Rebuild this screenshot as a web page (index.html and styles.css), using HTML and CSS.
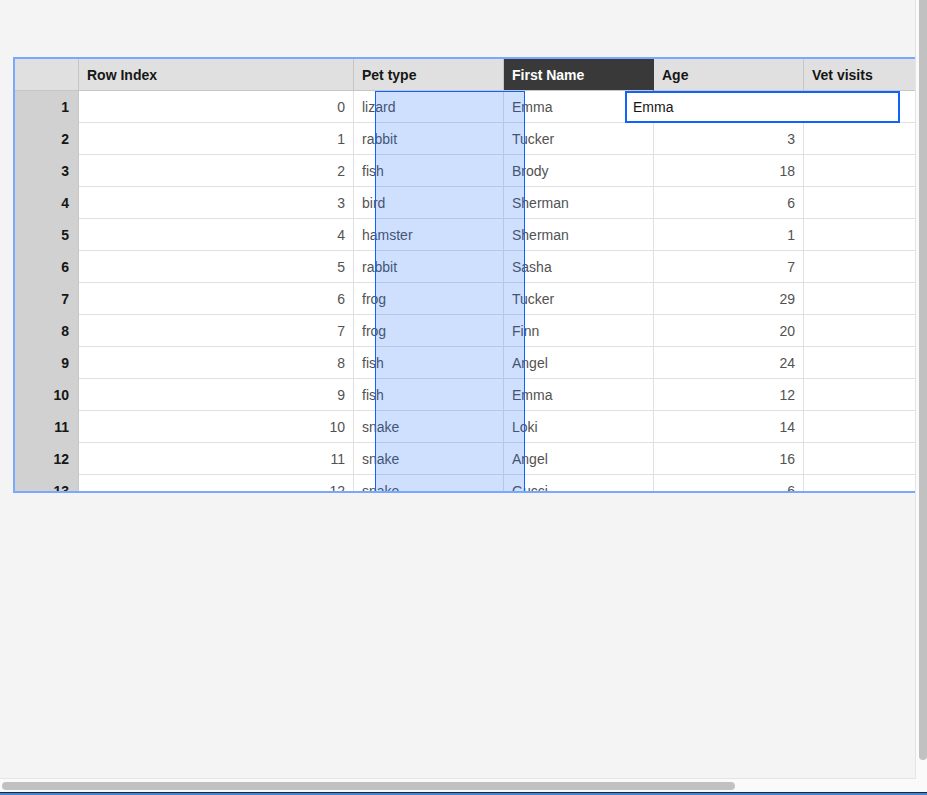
FILE: index.html
```html
<!DOCTYPE html>
<html>
<head>
<meta charset="utf-8">
<link rel="stylesheet" href="styles.css">
</head>
<body>
<div class="window">
  <div class="top">
    <div class="viewport">
      <div class="grid">
        <div class="cells">
          <div class="hc corner"></div><div class="hc">Row Index</div><div class="hc">Pet type</div><div class="hc active">First Name</div><div class="hc">Age</div><div class="hc">Vet visits</div>

          <div class="rh">1</div><div class="c num">0</div><div class="c">lizard</div><div class="c">Emma</div><div class="c num"></div><div class="c"></div>
          <div class="rh">2</div><div class="c num">1</div><div class="c">rabbit</div><div class="c">Tucker</div><div class="c num">3</div><div class="c"></div>
          <div class="rh">3</div><div class="c num">2</div><div class="c">fish</div><div class="c">Brody</div><div class="c num">18</div><div class="c"></div>
          <div class="rh">4</div><div class="c num">3</div><div class="c">bird</div><div class="c">Sherman</div><div class="c num">6</div><div class="c"></div>
          <div class="rh">5</div><div class="c num">4</div><div class="c">hamster</div><div class="c">Sherman</div><div class="c num">1</div><div class="c"></div>
          <div class="rh">6</div><div class="c num">5</div><div class="c">rabbit</div><div class="c">Sasha</div><div class="c num">7</div><div class="c"></div>
          <div class="rh">7</div><div class="c num">6</div><div class="c">frog</div><div class="c">Tucker</div><div class="c num">29</div><div class="c"></div>
          <div class="rh">8</div><div class="c num">7</div><div class="c">frog</div><div class="c">Finn</div><div class="c num">20</div><div class="c"></div>
          <div class="rh">9</div><div class="c num">8</div><div class="c">fish</div><div class="c">Angel</div><div class="c num">24</div><div class="c"></div>
          <div class="rh">10</div><div class="c num">9</div><div class="c">fish</div><div class="c">Emma</div><div class="c num">12</div><div class="c"></div>
          <div class="rh">11</div><div class="c num">10</div><div class="c">snake</div><div class="c">Loki</div><div class="c num">14</div><div class="c"></div>
          <div class="rh">12</div><div class="c num">11</div><div class="c">snake</div><div class="c">Angel</div><div class="c num">16</div><div class="c"></div>
          <div class="rh">13</div><div class="c num">12</div><div class="c">snake</div><div class="c">Gucci</div><div class="c num">6</div><div class="c"></div>
        </div>
        <div class="selection"></div>
        <div class="editor">Emma</div>
      </div>
    </div>
    <div class="vscroll"><div class="vthumb"></div></div>
  </div>
  <div class="hscroll"><div class="hthumb"></div></div>
  <div class="edge"></div>
</div>
</body>
</html>
```

FILE: styles.css
```css
* { box-sizing: border-box; }
html, body { margin: 0; padding: 0; }
body {
  width: 927px;
  height: 795px;
  overflow: hidden;
  font-family: "Liberation Sans", Arial, sans-serif;
  font-size: 14px;
  background: #fafafa;
}
.window { display: flex; flex-direction: column; width: 927px; height: 795px; }
.top { display: flex; height: 779px; }
.viewport {
  width: 916px;
  height: 779px;
  background: #f4f4f4;
  border-right: 1px solid #e4e4e4;
  border-bottom: 1px solid #e4e4e4;
  overflow: hidden;
  padding: 57px 0 0 13px;
}
.vscroll { width: 11px; height: 779px; padding: 0 0 0 3px; background: #fafafa; }
.vthumb { width: 8px; height: 760px; background: #c1c1c1; border-radius: 0 0 4px 4px; }
.hscroll { height: 13px; padding: 3px 0 0 2px; background: #fafafa; }
.hthumb { width: 733px; height: 8px; background: #c1c1c1; border-radius: 4px; }
.edge { height: 3px; border-top: 1px solid #1d2733; background: #3b86d8; }

.grid {
  position: relative;
  width: 943px;
  height: 436px;
  border: 2px solid #78a9ff;
  overflow: hidden;
  background: #ffffff;
}
.cells {
  display: grid;
  grid-template-columns: 64px 275px 150px 150px 150px 150px;
  grid-auto-rows: 32px;
}
.hc {
  display: flex;
  align-items: center;
  padding: 0 8px;
  background: #e0e0e0;
  color: #161616;
  font-weight: bold;
  border-right: 1px solid #c6c6c6;
  border-bottom: 1px solid #c6c6c6;
}
.hc.active { background: #393939; color: #ffffff; border-right-color: #393939; }
.rh {
  display: flex;
  align-items: center;
  justify-content: flex-end;
  padding: 0 9px 0 8px;
  background: #d1d1d1;
  color: #161616;
  font-weight: bold;
  border-right: 1px solid #c6c6c6;
  border-bottom: 1px solid #d1d1d1;
}
.c {
  display: flex;
  align-items: center;
  padding: 0 8px;
  color: #525252;
  background: #ffffff;
  border-right: 1px solid #e0e0e0;
  border-bottom: 1px solid #e0e0e0;
  white-space: nowrap;
}
.c.num { justify-content: flex-end; }

.selection {
  position: absolute;
  left: 360px;
  top: 32px;
  width: 150px;
  height: 420px;
  background: rgba(15, 98, 254, 0.2);
  border: 1px solid #0f62fe;
  border-bottom: none;
}
.editor {
  position: absolute;
  left: 610px;
  top: 32px;
  width: 275px;
  height: 32px;
  border: 2px solid #0f62fe;
  background: #ffffff;
  color: #161616;
  padding: 0 6px;
  display: flex;
  align-items: center;
}
```
